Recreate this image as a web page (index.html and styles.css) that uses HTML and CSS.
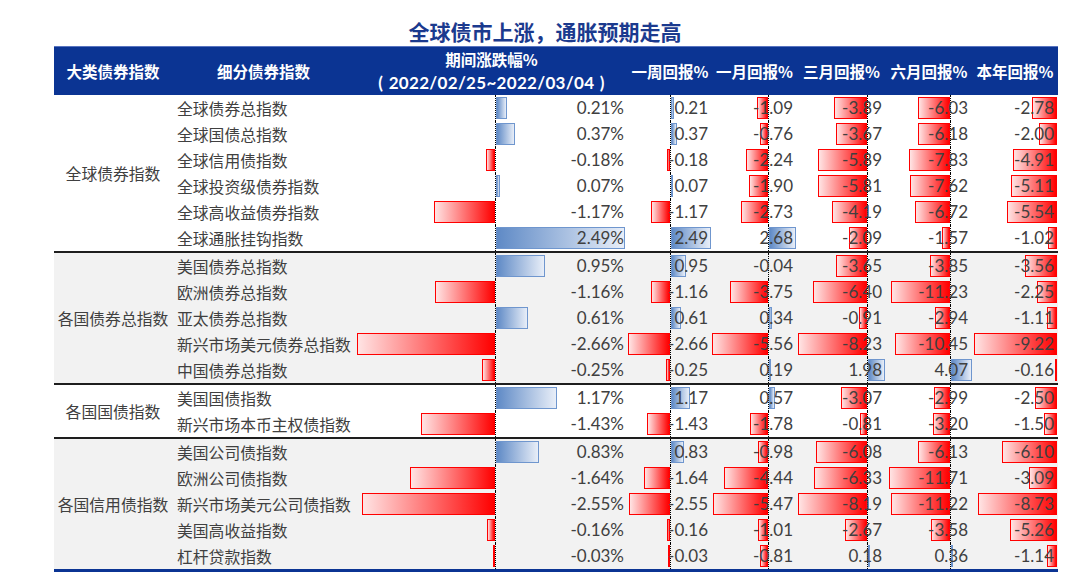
FILE: index.html
```html
<!DOCTYPE html>
<html lang="zh-CN">
<head>
<meta charset="utf-8">
<title>全球债市上涨，通胀预期走高</title>
<link rel="stylesheet" href="styles.css">
</head>
<body>
<h1 class="title">全球债市上涨，通胀预期走高</h1>
<div class="table">
  <div class="thead">
    <div class="th">大类债券指数</div>
    <div class="th">细分债券指数</div>
    <div class="th"><span>期间涨跌幅%</span><span class="range">( 2022/02/25~2022/03/04 )</span></div>
    <div class="th">一周回报%</div>
    <div class="th">一月回报%</div>
    <div class="th">三月回报%</div>
    <div class="th">六月回报%</div>
    <div class="th">本年回报%</div>
  </div>

  <div class="group g6">
    <div class="glabel">全球债券指数</div>

    <div class="name">全球债券总指数</div>
    <div class="cell c3"><div class="bars"><div class="neg"></div><div class="pos"><i class="bp" style="width:11px"></i></div></div><span class="num">0.21%</span></div>
    <div class="cell c4"><div class="bars"><div class="neg"></div><div class="pos"><i class="bp" style="width:3px"></i></div></div><span class="num">0.21</span></div>
    <div class="cell c5"><div class="bars"><div class="neg"><i class="bn" style="width:11px"></i></div><div class="pos"></div></div><span class="num">-1.09</span></div>
    <div class="cell c6"><div class="bars"><div class="neg"><i class="bn" style="width:33px"></i></div><div class="pos"></div></div><span class="num">-3.89</span></div>
    <div class="cell c7"><div class="bars"><div class="neg"><i class="bn" style="width:32px"></i></div><div class="pos"></div></div><span class="num">-6.03</span></div>
    <div class="cell c8"><div class="bars"><div class="neg"><i class="bn" style="width:25px"></i></div></div><span class="num">-2.78</span></div>

    <div class="name">全球国债总指数</div>
    <div class="cell c3"><div class="bars"><div class="neg"></div><div class="pos"><i class="bp" style="width:19px"></i></div></div><span class="num">0.37%</span></div>
    <div class="cell c4"><div class="bars"><div class="neg"></div><div class="pos"><i class="bp" style="width:6px"></i></div></div><span class="num">0.37</span></div>
    <div class="cell c5"><div class="bars"><div class="neg"><i class="bn" style="width:8px"></i></div><div class="pos"></div></div><span class="num">-0.76</span></div>
    <div class="cell c6"><div class="bars"><div class="neg"><i class="bn" style="width:31px"></i></div><div class="pos"></div></div><span class="num">-3.67</span></div>
    <div class="cell c7"><div class="bars"><div class="neg"><i class="bn" style="width:32px"></i></div><div class="pos"></div></div><span class="num">-6.18</span></div>
    <div class="cell c8"><div class="bars"><div class="neg"><i class="bn" style="width:18px"></i></div></div><span class="num">-2.00</span></div>

    <div class="name">全球信用债指数</div>
    <div class="cell c3"><div class="bars"><div class="neg"><i class="bn" style="width:9px"></i></div><div class="pos"></div></div><span class="num">-0.18%</span></div>
    <div class="cell c4"><div class="bars"><div class="neg"><i class="bn" style="width:3px"></i></div><div class="pos"></div></div><span class="num">-0.18</span></div>
    <div class="cell c5"><div class="bars"><div class="neg"><i class="bn" style="width:22px"></i></div><div class="pos"></div></div><span class="num">-2.24</span></div>
    <div class="cell c6"><div class="bars"><div class="neg"><i class="bn" style="width:49px"></i></div><div class="pos"></div></div><span class="num">-5.89</span></div>
    <div class="cell c7"><div class="bars"><div class="neg"><i class="bn" style="width:41px"></i></div><div class="pos"></div></div><span class="num">-7.83</span></div>
    <div class="cell c8"><div class="bars"><div class="neg"><i class="bn" style="width:44px"></i></div></div><span class="num">-4.91</span></div>

    <div class="name">全球投资级债券指数</div>
    <div class="cell c3"><div class="bars"><div class="neg"></div><div class="pos"><i class="bp" style="width:4px"></i></div></div><span class="num">0.07%</span></div>
    <div class="cell c4"><div class="bars"><div class="neg"></div><div class="pos"><i class="bp" style="width:1px"></i></div></div><span class="num">0.07</span></div>
    <div class="cell c5"><div class="bars"><div class="neg"><i class="bn" style="width:19px"></i></div><div class="pos"></div></div><span class="num">-1.90</span></div>
    <div class="cell c6"><div class="bars"><div class="neg"><i class="bn" style="width:49px"></i></div><div class="pos"></div></div><span class="num">-5.81</span></div>
    <div class="cell c7"><div class="bars"><div class="neg"><i class="bn" style="width:40px"></i></div><div class="pos"></div></div><span class="num">-7.62</span></div>
    <div class="cell c8"><div class="bars"><div class="neg"><i class="bn" style="width:46px"></i></div></div><span class="num">-5.11</span></div>

    <div class="name">全球高收益债券指数</div>
    <div class="cell c3"><div class="bars"><div class="neg"><i class="bn" style="width:61px"></i></div><div class="pos"></div></div><span class="num">-1.17%</span></div>
    <div class="cell c4"><div class="bars"><div class="neg"><i class="bn" style="width:19px"></i></div><div class="pos"></div></div><span class="num">-1.17</span></div>
    <div class="cell c5"><div class="bars"><div class="neg"><i class="bn" style="width:27px"></i></div><div class="pos"></div></div><span class="num">-2.73</span></div>
    <div class="cell c6"><div class="bars"><div class="neg"><i class="bn" style="width:35px"></i></div><div class="pos"></div></div><span class="num">-4.19</span></div>
    <div class="cell c7"><div class="bars"><div class="neg"><i class="bn" style="width:35px"></i></div><div class="pos"></div></div><span class="num">-6.72</span></div>
    <div class="cell c8"><div class="bars"><div class="neg"><i class="bn" style="width:50px"></i></div></div><span class="num">-5.54</span></div>

    <div class="name">全球通胀挂钩指数</div>
    <div class="cell c3"><div class="bars"><div class="neg"></div><div class="pos"><i class="bp" style="width:129px"></i></div></div><span class="num">2.49%</span></div>
    <div class="cell c4"><div class="bars"><div class="neg"></div><div class="pos"><i class="bp" style="width:40px"></i></div></div><span class="num">2.49</span></div>
    <div class="cell c5"><div class="bars"><div class="neg"></div><div class="pos"><i class="bp" style="width:27px"></i></div></div><span class="num">2.68</span></div>
    <div class="cell c6"><div class="bars"><div class="neg"><i class="bn" style="width:18px"></i></div><div class="pos"></div></div><span class="num">-2.09</span></div>
    <div class="cell c7"><div class="bars"><div class="neg"><i class="bn" style="width:8px"></i></div><div class="pos"></div></div><span class="num">-1.57</span></div>
    <div class="cell c8"><div class="bars"><div class="neg"><i class="bn" style="width:9px"></i></div></div><span class="num">-1.02</span></div>
  </div>

  <div class="group g5 gray">
    <div class="glabel">各国债券总指数</div>

    <div class="name">美国债券总指数</div>
    <div class="cell c3"><div class="bars"><div class="neg"></div><div class="pos"><i class="bp" style="width:49px"></i></div></div><span class="num">0.95%</span></div>
    <div class="cell c4"><div class="bars"><div class="neg"></div><div class="pos"><i class="bp" style="width:15px"></i></div></div><span class="num">0.95</span></div>
    <div class="cell c5"><div class="bars"><div class="neg"></div><div class="pos"></div></div><span class="num">-0.04</span></div>
    <div class="cell c6"><div class="bars"><div class="neg"><i class="bn" style="width:31px"></i></div><div class="pos"></div></div><span class="num">-3.65</span></div>
    <div class="cell c7"><div class="bars"><div class="neg"><i class="bn" style="width:20px"></i></div><div class="pos"></div></div><span class="num">-3.85</span></div>
    <div class="cell c8"><div class="bars"><div class="neg"><i class="bn" style="width:32px"></i></div></div><span class="num">-3.56</span></div>

    <div class="name">欧洲债券总指数</div>
    <div class="cell c3"><div class="bars"><div class="neg"><i class="bn" style="width:60px"></i></div><div class="pos"></div></div><span class="num">-1.16%</span></div>
    <div class="cell c4"><div class="bars"><div class="neg"><i class="bn" style="width:19px"></i></div><div class="pos"></div></div><span class="num">-1.16</span></div>
    <div class="cell c5"><div class="bars"><div class="neg"><i class="bn" style="width:38px"></i></div><div class="pos"></div></div><span class="num">-3.75</span></div>
    <div class="cell c6"><div class="bars"><div class="neg"><i class="bn" style="width:54px"></i></div><div class="pos"></div></div><span class="num">-6.40</span></div>
    <div class="cell c7"><div class="bars"><div class="neg"><i class="bn" style="width:59px"></i></div><div class="pos"></div></div><span class="num">-11.23</span></div>
    <div class="cell c8"><div class="bars"><div class="neg"><i class="bn" style="width:20px"></i></div></div><span class="num">-2.25</span></div>

    <div class="name">亚太债券总指数</div>
    <div class="cell c3"><div class="bars"><div class="neg"></div><div class="pos"><i class="bp" style="width:32px"></i></div></div><span class="num">0.61%</span></div>
    <div class="cell c4"><div class="bars"><div class="neg"></div><div class="pos"><i class="bp" style="width:10px"></i></div></div><span class="num">0.61</span></div>
    <div class="cell c5"><div class="bars"><div class="neg"></div><div class="pos"><i class="bp" style="width:3px"></i></div></div><span class="num">0.34</span></div>
    <div class="cell c6"><div class="bars"><div class="neg"><i class="bn" style="width:8px"></i></div><div class="pos"></div></div><span class="num">-0.91</span></div>
    <div class="cell c7"><div class="bars"><div class="neg"><i class="bn" style="width:15px"></i></div><div class="pos"></div></div><span class="num">-2.94</span></div>
    <div class="cell c8"><div class="bars"><div class="neg"><i class="bn" style="width:10px"></i></div></div><span class="num">-1.11</span></div>

    <div class="name">新兴市场美元债券总指数</div>
    <div class="cell c3"><div class="bars"><div class="neg"><i class="bn" style="width:138px"></i></div><div class="pos"></div></div><span class="num">-2.66%</span></div>
    <div class="cell c4"><div class="bars"><div class="neg"><i class="bn" style="width:42px"></i></div><div class="pos"></div></div><span class="num">-2.66</span></div>
    <div class="cell c5"><div class="bars"><div class="neg"><i class="bn" style="width:56px"></i></div><div class="pos"></div></div><span class="num">-5.56</span></div>
    <div class="cell c6"><div class="bars"><div class="neg"><i class="bn" style="width:69px"></i></div><div class="pos"></div></div><span class="num">-8.23</span></div>
    <div class="cell c7"><div class="bars"><div class="neg"><i class="bn" style="width:55px"></i></div><div class="pos"></div></div><span class="num">-10.45</span></div>
    <div class="cell c8"><div class="bars"><div class="neg"><i class="bn" style="width:83px"></i></div></div><span class="num">-9.22</span></div>

    <div class="name">中国债券总指数</div>
    <div class="cell c3"><div class="bars"><div class="neg"><i class="bn" style="width:13px"></i></div><div class="pos"></div></div><span class="num">-0.25%</span></div>
    <div class="cell c4"><div class="bars"><div class="neg"><i class="bn" style="width:4px"></i></div><div class="pos"></div></div><span class="num">-0.25</span></div>
    <div class="cell c5"><div class="bars"><div class="neg"></div><div class="pos"><i class="bp" style="width:2px"></i></div></div><span class="num">0.19</span></div>
    <div class="cell c6"><div class="bars"><div class="neg"></div><div class="pos"><i class="bp" style="width:17px"></i></div></div><span class="num">1.98</span></div>
    <div class="cell c7"><div class="bars"><div class="neg"></div><div class="pos"><i class="bp" style="width:21px"></i></div></div><span class="num">4.07</span></div>
    <div class="cell c8"><div class="bars"><div class="neg"><i class="bn" style="width:2px"></i></div></div><span class="num">-0.16</span></div>
  </div>

  <div class="group g2">
    <div class="glabel">各国国债指数</div>

    <div class="name">美国国债指数</div>
    <div class="cell c3"><div class="bars"><div class="neg"></div><div class="pos"><i class="bp" style="width:61px"></i></div></div><span class="num">1.17%</span></div>
    <div class="cell c4"><div class="bars"><div class="neg"></div><div class="pos"><i class="bp" style="width:19px"></i></div></div><span class="num">1.17</span></div>
    <div class="cell c5"><div class="bars"><div class="neg"></div><div class="pos"><i class="bp" style="width:6px"></i></div></div><span class="num">0.57</span></div>
    <div class="cell c6"><div class="bars"><div class="neg"><i class="bn" style="width:26px"></i></div><div class="pos"></div></div><span class="num">-3.07</span></div>
    <div class="cell c7"><div class="bars"><div class="neg"><i class="bn" style="width:16px"></i></div><div class="pos"></div></div><span class="num">-2.99</span></div>
    <div class="cell c8"><div class="bars"><div class="neg"><i class="bn" style="width:22px"></i></div></div><span class="num">-2.50</span></div>

    <div class="name">新兴市场本币主权债指数</div>
    <div class="cell c3"><div class="bars"><div class="neg"><i class="bn" style="width:74px"></i></div><div class="pos"></div></div><span class="num">-1.43%</span></div>
    <div class="cell c4"><div class="bars"><div class="neg"><i class="bn" style="width:23px"></i></div><div class="pos"></div></div><span class="num">-1.43</span></div>
    <div class="cell c5"><div class="bars"><div class="neg"><i class="bn" style="width:18px"></i></div><div class="pos"></div></div><span class="num">-1.78</span></div>
    <div class="cell c6"><div class="bars"><div class="neg"><i class="bn" style="width:7px"></i></div><div class="pos"></div></div><span class="num">-0.81</span></div>
    <div class="cell c7"><div class="bars"><div class="neg"><i class="bn" style="width:17px"></i></div><div class="pos"></div></div><span class="num">-3.20</span></div>
    <div class="cell c8"><div class="bars"><div class="neg"><i class="bn" style="width:13px"></i></div></div><span class="num">-1.50</span></div>
  </div>

  <div class="group g5 gray">
    <div class="glabel">各国信用债指数</div>

    <div class="name">美国公司债指数</div>
    <div class="cell c3"><div class="bars"><div class="neg"></div><div class="pos"><i class="bp" style="width:43px"></i></div></div><span class="num">0.83%</span></div>
    <div class="cell c4"><div class="bars"><div class="neg"></div><div class="pos"><i class="bp" style="width:13px"></i></div></div><span class="num">0.83</span></div>
    <div class="cell c5"><div class="bars"><div class="neg"><i class="bn" style="width:10px"></i></div><div class="pos"></div></div><span class="num">-0.98</span></div>
    <div class="cell c6"><div class="bars"><div class="neg"><i class="bn" style="width:51px"></i></div><div class="pos"></div></div><span class="num">-6.08</span></div>
    <div class="cell c7"><div class="bars"><div class="neg"><i class="bn" style="width:32px"></i></div><div class="pos"></div></div><span class="num">-6.13</span></div>
    <div class="cell c8"><div class="bars"><div class="neg"><i class="bn" style="width:55px"></i></div></div><span class="num">-6.10</span></div>

    <div class="name">欧洲公司债指数</div>
    <div class="cell c3"><div class="bars"><div class="neg"><i class="bn" style="width:85px"></i></div><div class="pos"></div></div><span class="num">-1.64%</span></div>
    <div class="cell c4"><div class="bars"><div class="neg"><i class="bn" style="width:26px"></i></div><div class="pos"></div></div><span class="num">-1.64</span></div>
    <div class="cell c5"><div class="bars"><div class="neg"><i class="bn" style="width:44px"></i></div><div class="pos"></div></div><span class="num">-4.44</span></div>
    <div class="cell c6"><div class="bars"><div class="neg"><i class="bn" style="width:53px"></i></div><div class="pos"></div></div><span class="num">-6.33</span></div>
    <div class="cell c7"><div class="bars"><div class="neg"><i class="bn" style="width:61px"></i></div><div class="pos"></div></div><span class="num">-11.71</span></div>
    <div class="cell c8"><div class="bars"><div class="neg"><i class="bn" style="width:28px"></i></div></div><span class="num">-3.09</span></div>

    <div class="name">新兴市场美元公司债指数</div>
    <div class="cell c3"><div class="bars"><div class="neg"><i class="bn" style="width:133px"></i></div><div class="pos"></div></div><span class="num">-2.55%</span></div>
    <div class="cell c4"><div class="bars"><div class="neg"><i class="bn" style="width:41px"></i></div><div class="pos"></div></div><span class="num">-2.55</span></div>
    <div class="cell c5"><div class="bars"><div class="neg"><i class="bn" style="width:55px"></i></div><div class="pos"></div></div><span class="num">-5.47</span></div>
    <div class="cell c6"><div class="bars"><div class="neg"><i class="bn" style="width:69px"></i></div><div class="pos"></div></div><span class="num">-8.19</span></div>
    <div class="cell c7"><div class="bars"><div class="neg"><i class="bn" style="width:59px"></i></div><div class="pos"></div></div><span class="num">-11.22</span></div>
    <div class="cell c8"><div class="bars"><div class="neg"><i class="bn" style="width:79px"></i></div></div><span class="num">-8.73</span></div>

    <div class="name">美国高收益指数</div>
    <div class="cell c3"><div class="bars"><div class="neg"><i class="bn" style="width:8px"></i></div><div class="pos"></div></div><span class="num">-0.16%</span></div>
    <div class="cell c4"><div class="bars"><div class="neg"><i class="bn" style="width:3px"></i></div><div class="pos"></div></div><span class="num">-0.16</span></div>
    <div class="cell c5"><div class="bars"><div class="neg"><i class="bn" style="width:10px"></i></div><div class="pos"></div></div><span class="num">-1.01</span></div>
    <div class="cell c6"><div class="bars"><div class="neg"><i class="bn" style="width:22px"></i></div><div class="pos"></div></div><span class="num">-2.67</span></div>
    <div class="cell c7"><div class="bars"><div class="neg"><i class="bn" style="width:19px"></i></div><div class="pos"></div></div><span class="num">-3.58</span></div>
    <div class="cell c8"><div class="bars"><div class="neg"><i class="bn" style="width:47px"></i></div></div><span class="num">-5.26</span></div>

    <div class="name">杠杆贷款指数</div>
    <div class="cell c3"><div class="bars"><div class="neg"><i class="bn" style="width:2px"></i></div><div class="pos"></div></div><span class="num">-0.03%</span></div>
    <div class="cell c4"><div class="bars"><div class="neg"><i class="bn" style="width:1px"></i></div><div class="pos"></div></div><span class="num">-0.03</span></div>
    <div class="cell c5"><div class="bars"><div class="neg"><i class="bn" style="width:8px"></i></div><div class="pos"></div></div><span class="num">-0.81</span></div>
    <div class="cell c6"><div class="bars"><div class="neg"></div><div class="pos"><i class="bp" style="width:2px"></i></div></div><span class="num">0.18</span></div>
    <div class="cell c7"><div class="bars"><div class="neg"></div><div class="pos"><i class="bp" style="width:2px"></i></div></div><span class="num">0.36</span></div>
    <div class="cell c8"><div class="bars"><div class="neg"><i class="bn" style="width:10px"></i></div></div><span class="num">-1.14</span></div>
  </div>
</div>
</body>
</html>
```

FILE: styles.css
```css
* {
  box-sizing: border-box;
  margin: 0;
  padding: 0;
}

body {
  width: 1080px;
  height: 582px;
  overflow: hidden;
  background: #ffffff;
  color: #404040;
  font-family: "Noto Sans CJK SC", "Noto Sans", sans-serif;
}

.title {
  height: 46px;
  padding: 17px 0 0 10px;
  line-height: 29px;
  text-align: center;
  font-size: 21px;
  font-weight: 700;
  color: #1b3a8e;
}

.table {
  width: 1004px;
  margin-left: 54px;
  border-bottom: 3px solid #0b3493;
}

.thead,
.group {
  display: grid;
  grid-template-columns: 118px 183px 273px 84px 85px 89px 86px 86px;
}

.thead {
  height: 49px;
  background: #0b3493;
  border-top: 1px solid #5874c0;
  color: #ffffff;
  font-size: 15.5px;
  font-weight: 700;
}

.th {
  display: flex;
  flex-direction: column;
  align-items: center;
  justify-content: center;
  line-height: 23px;
  white-space: nowrap;
}

.range {
  font-family: Lato, "Liberation Sans", sans-serif;
  font-size: 17px;
  letter-spacing: 0.3px;
  word-spacing: 1px;
}

.g6 { grid-template-rows: repeat(6, 26px); }
.g5 { grid-template-rows: repeat(5, 26px); }
.g2 { grid-template-rows: repeat(2, 26px); }

.group + .group {
  border-top: 2px solid #1e1e1e;
}

.gray {
  background: #f2f2f2;
}

.glabel {
  grid-column: 1;
  grid-row: 1 / -1;
  display: flex;
  align-items: center;
  justify-content: center;
  font-size: 15.8px;
  white-space: nowrap;
}

.name {
  display: flex;
  align-items: center;
  padding-left: 5px;
  font-size: 15.8px;
  white-space: nowrap;
}

.cell {
  display: grid;
  min-width: 0;
}

.bars,
.num {
  grid-area: 1 / 1;
}

.bars {
  display: flex;
}

.neg {
  display: flex;
  justify-content: flex-end;
  align-items: center;
  border-right: 1px dotted #000000;
}

.pos {
  flex: 1;
  display: flex;
  align-items: center;
}

.c3 .neg { width: 141px; }
.c4 .neg { width: 43px; }
.c5 .neg { width: 57px; }
.c6 .neg { width: 71px; }
.c7 .neg { width: 65px; }
.c8 .neg {
  width: 100%;
  border-right: none;
  padding-right: 1px;
}

.bn,
.bp {
  display: block;
  height: 22px;
}

.bn {
  background: linear-gradient(to right, #ffe4e4, #ff0000);
  border: 1px solid #ff0000;
}

.bp {
  background: linear-gradient(to right, #5f8ac6, #e8eef8);
  border: 1px solid #6f96ce;
}

.num {
  align-self: center;
  justify-self: end;
  padding-right: 4px;
  font-family: Lato, "Liberation Sans", sans-serif;
  font-size: 17px;
  line-height: 20px;
  white-space: nowrap;
}
```
